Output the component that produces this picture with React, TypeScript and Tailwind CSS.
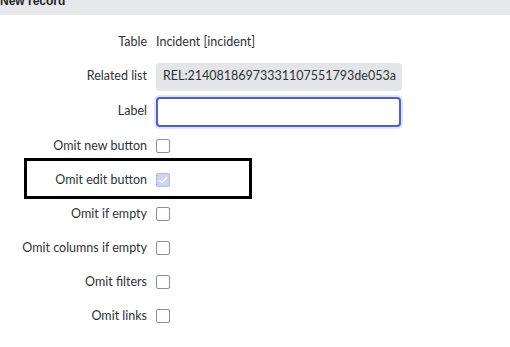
import React from "react";

const lato = { fontFamily: "Lato, 'Noto Sans', sans-serif" };

function Label({ children }: { children: React.ReactNode }) {
  return (
    <div className="w-[147px] shrink-0 whitespace-nowrap text-right text-[12.5px] text-[#2e3236]">{children}</div>
  );
}

function Checkbox() {
  return <div className="h-[14px] w-[14px] rounded-[2px] border border-[#8b8e97] bg-white" />;
}

function DisabledCheckbox() {
  return (
    <div className="flex h-[14px] w-[14px] items-center justify-center rounded-[2px] border border-[#b4b7e8] bg-[#cfd2f3]">
      <svg width="10" height="10" viewBox="0 0 10 10" fill="none">
        <path d="M1.5 5.2 L4 7.5 L8.5 2.8" stroke="white" strokeWidth="1.4" strokeLinecap="round" strokeLinejoin="round" />
      </svg>
    </div>
  );
}

export default function App() {
  const checks = [
    "Omit new button",
    "Omit edit button",
    "Omit if empty",
    "Omit columns if empty",
    "Omit filters",
    "Omit links",
  ];
  return (
    <div className="h-[347px] w-[510px] overflow-hidden bg-white" style={lato}>
      <div className="h-[15px] w-full overflow-hidden bg-[#e7e8eb]">
        <div
          className="-mt-[5px] text-[12px] font-bold leading-[12px] text-[#1f2326]"
          style={{ fontFamily: "'Liberation Sans', Arial, sans-serif" }}
        >
          New record
        </div>
      </div>
      <div className="flex flex-col pt-[10px]">
        <div className="flex h-[34px] items-center gap-[9px]">
          <Label>Table</Label>
          <div className="text-[12.5px] text-[#2e3236]">Incident [incident]</div>
        </div>
        <div className="flex h-[35px] items-center gap-[9px]">
          <Label>Related list</Label>
          <div className="flex h-[28px] w-[246px] items-center overflow-hidden whitespace-nowrap rounded-[4px] bg-[#e4e5e8] pl-[7px] text-[12.5px] text-[#2e3236]">
            REL:21408186973331107551793de053a
          </div>
        </div>
        <div className="flex h-[35px] items-center gap-[9px]">
          <Label>Label</Label>
          <div className="h-[30px] w-[245px] rounded-[4px] border-2 border-[#4b5de4] bg-white ring-2 ring-[#e3e6fb]" />
        </div>
        {checks.map((c, i) => (
          <div key={c} className="relative flex h-[34px] items-center gap-[9px]">
            <Label>{c}</Label>
            {i === 1 ? <DisabledCheckbox /> : <Checkbox />}
            {i === 1 && (
              <div className="pointer-events-none absolute left-[24px] top-[-5px] h-[41px] w-[228px] border-[3px] border-black" />
            )}
          </div>
        ))}
      </div>
    </div>
  );
}
